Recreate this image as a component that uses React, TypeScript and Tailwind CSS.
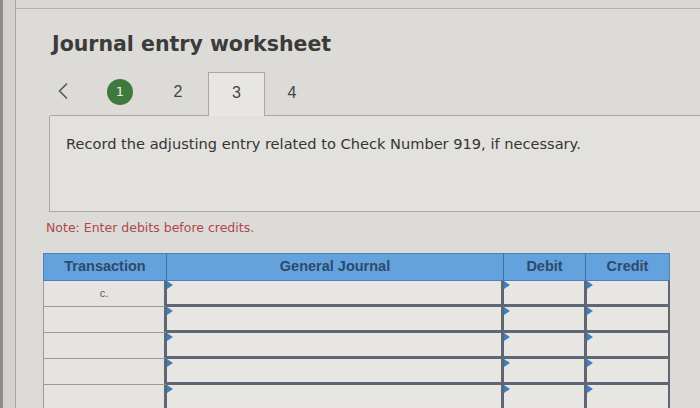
import React from 'react';

const Marker: React.FC = () => (
  <span className="absolute left-0 top-0 w-0 h-0 border-t-[4px] border-b-[4px] border-l-[6px] border-t-transparent border-b-transparent border-l-[#3c7fc4]" />
);

const InputCell: React.FC<{ w: string; last?: boolean }> = ({ w, last }) => (
  <div
    className={`relative ${w} h-full bg-[#e7e6e2] border-b-[3px] border-[#5e6773] ${
      last ? 'border-r-2' : 'border-r-[3px]'
    }`}
  >
    <Marker />
  </div>
);

const rows = ['c.', '', '', '', '', ''];

const App: React.FC = () => {
  return (
    <div className="w-[700px] h-[408px] overflow-hidden flex bg-[#d8d7d3] font-['DejaVu_Sans',sans-serif]">
      {/* photo edge */}
      <div className="w-[3px] h-full bg-[#8d8c88]" />
      <div className="w-[13px] h-full border-r border-[#a8a7a3] bg-[#d3d2ce]" />

      {/* panel */}
      <div className="flex-1 mt-[8px] border-t border-[#b3b2ae] bg-[#dcdbd7]">
        <h1 className="ml-[36px] mt-[22px] text-[20.5px] leading-[26px] font-bold text-[#3b3b3b]">
          Journal entry worksheet
        </h1>

        {/* tabs */}
        <div className="ml-[34px] mt-[15px] flex items-end h-[44px]">
          <div className="w-[42px] h-full flex items-center pl-[7px] border-b border-[#a9a8a4]">
            <svg width="12" height="18" viewBox="0 0 12 18" className="mt-[-6px]">
              <path d="M10 1.5 L2.5 9 L10 16.5" fill="none" stroke="#555" strokeWidth="1.6" />
            </svg>
          </div>
          <div className="w-[56px] h-full flex items-center justify-center border-b border-[#a9a8a4]">
            <span className="w-[26px] h-[26px] rounded-full bg-[#3f7a3c] text-[#e8f0e6] text-[13px] flex items-center justify-center mt-[-4px]">
              1
            </span>
          </div>
          <div className="w-[60px] h-full flex items-center justify-center border-b border-[#a9a8a4] text-[16px] text-[#444] font-['Liberation_Sans',sans-serif]">
            <span className="mt-[-3px]">2</span>
          </div>
          <div className="w-[57px] h-full flex items-center justify-center border-t border-l border-r border-[#a9a8a4] bg-[#e7e6e2] text-[16px] text-[#444] font-['Liberation_Sans',sans-serif]">
            <span className="mt-[-3px]">3</span>
          </div>
          <div className="w-[54px] h-full flex items-center justify-center border-b border-[#a9a8a4] text-[16px] text-[#444] font-['Liberation_Sans',sans-serif]">
            <span className="mt-[-2px]">4</span>
          </div>
          <div className="flex-1 h-full border-b border-[#a9a8a4]" />
        </div>

        {/* question box */}
        <div className="ml-[33px] h-[96px] border-l border-b border-[#a9a8a4] bg-[#e2e1dd] pl-[16px] pt-[18px]">
          <p className="text-[14.6px] leading-[20px] text-[#353535]">
            Record the adjusting entry related to Check Number 919, if necessary.
          </p>
        </div>

        <p className="ml-[30px] mt-[8px] text-[12.5px] leading-[16px] text-[#b0474a]">
          Note: Enter debits before credits.
        </p>

        {/* journal table */}
        <div className="ml-[27px] mt-[17px] w-[627px] font-['Liberation_Sans',sans-serif]">
          <div className="flex h-[28px] bg-[#64a2dd] border border-[#4b82bd] text-[14.5px] font-bold text-[#2c4a6c]">
            <div className="w-[123px] flex items-center justify-center border-r border-[#3f72a8]">Transaction</div>
            <div className="w-[337px] flex items-center justify-center border-r border-[#3f72a8]">General Journal</div>
            <div className="w-[82px] flex items-center justify-center border-r border-[#3f72a8]">Debit</div>
            <div className="flex-1 flex items-center justify-center">Credit</div>
          </div>
          {rows.map((t, i) => (
            <div key={i} className="flex h-[26px]">
              <div className="w-[124px] h-full bg-[#e5e4e0] border-l border-b border-[#9b9a96] border-r-[3px] border-r-[#5e6773] flex items-center justify-center text-[11px] text-[#5a5a5a]">
                {t}
              </div>
              <InputCell w="w-[337px]" />
              <InputCell w="w-[83px]" />
              <InputCell w="w-[83px]" last />
            </div>
          ))}
        </div>
      </div>
    </div>
  );
};

export default App;
